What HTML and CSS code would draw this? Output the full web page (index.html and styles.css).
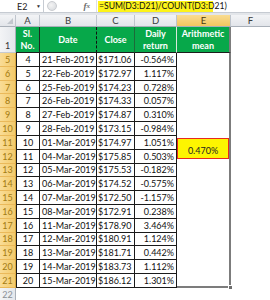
FILE: index.html
```html
<!DOCTYPE html>
<html>
<head>
<meta charset="utf-8">
<link rel="stylesheet" href="styles.css">
</head>
<body>
<div class="fbar">
  <div class="namebox"><span class="nb-text">E2</span><span class="nb-arrow">▼</span></div>
  <div class="splitter"></div>
  <div class="fx">f<span class="fxx">x</span></div>
  <div class="formula"><span class="hl">=SUM(D3:D21)/COUNT(D3:D21)</span></div>
</div>
<div class="gap"></div>
<div class="sheet">
  <div class="ch corner"><span class="tri"></span></div>
  <div class="ch">A</div>
  <div class="ch">B</div>
  <div class="ch">C</div>
  <div class="ch">D</div>
  <div class="ch ch-sel">E</div>
  <div class="ch ch-f">F</div>

  <div class="rh rh-1">1</div>
  <div class="gh gh-a">Sl.<br>No.</div>
  <div class="gh gh-b">Date</div>
  <div class="gh gh-c">Close</div>
  <div class="gh gh-d">Daily<br>return</div>
  <div class="gh gh-e">Arithmetic<br>mean</div>
  <div class="fcol"></div>

  <div class="ecol">
    <div class="espacer"></div>
    <div class="result">0.470%</div>
    <span class="handle"></span>
  </div>

  <div class="rh">5</div><div class="c ca">4</div><div class="c cb">21-Feb-2019</div><div class="c cc">$171.06</div><div class="c cd">-0.564%</div>
  <div class="rh">6</div><div class="c ca">5</div><div class="c cb">22-Feb-2019</div><div class="c cc">$172.97</div><div class="c cd">1.117%</div>
  <div class="rh">7</div><div class="c ca">6</div><div class="c cb">25-Feb-2019</div><div class="c cc">$174.23</div><div class="c cd">0.728%</div>
  <div class="rh">8</div><div class="c ca">7</div><div class="c cb">26-Feb-2019</div><div class="c cc">$174.33</div><div class="c cd">0.057%</div>
  <div class="rh">9</div><div class="c ca">8</div><div class="c cb">27-Feb-2019</div><div class="c cc">$174.87</div><div class="c cd">0.310%</div>
  <div class="rh">10</div><div class="c ca">9</div><div class="c cb">28-Feb-2019</div><div class="c cc">$173.15</div><div class="c cd">-0.984%</div>
  <div class="rh">11</div><div class="c ca">10</div><div class="c cb">01-Mar-2019</div><div class="c cc">$174.97</div><div class="c cd">1.051%</div>
  <div class="rh">12</div><div class="c ca">11</div><div class="c cb">04-Mar-2019</div><div class="c cc">$175.85</div><div class="c cd">0.503%</div>
  <div class="rh">13</div><div class="c ca">12</div><div class="c cb">05-Mar-2019</div><div class="c cc">$175.53</div><div class="c cd">-0.182%</div>
  <div class="rh">14</div><div class="c ca">13</div><div class="c cb">06-Mar-2019</div><div class="c cc">$174.52</div><div class="c cd">-0.575%</div>
  <div class="rh">15</div><div class="c ca">14</div><div class="c cb">07-Mar-2019</div><div class="c cc">$172.50</div><div class="c cd">-1.157%</div>
  <div class="rh">16</div><div class="c ca">15</div><div class="c cb">08-Mar-2019</div><div class="c cc">$172.91</div><div class="c cd">0.238%</div>
  <div class="rh">17</div><div class="c ca">16</div><div class="c cb">11-Mar-2019</div><div class="c cc">$178.90</div><div class="c cd">3.464%</div>
  <div class="rh">18</div><div class="c ca">17</div><div class="c cb">12-Mar-2019</div><div class="c cc">$180.91</div><div class="c cd">1.124%</div>
  <div class="rh">19</div><div class="c ca">18</div><div class="c cb">13-Mar-2019</div><div class="c cc">$181.71</div><div class="c cd">0.442%</div>
  <div class="rh">20</div><div class="c ca">19</div><div class="c cb">14-Mar-2019</div><div class="c cc">$183.73</div><div class="c cd">1.112%</div>
  <div class="rh">21</div><div class="c ca">20</div><div class="c cb">15-Mar-2019</div><div class="c cc">$186.12</div><div class="c cd">1.301%</div>

  <div class="rh rh-22">22</div>
  <div class="blank"></div>
</div>
</body>
</html>
```

FILE: styles.css
```css
* { box-sizing: border-box; }
html, body {
  margin: 0;
  padding: 0;
  width: 270px;
  height: 300px;
  overflow: hidden;
  background: #fff;
  font-family: Lato, "Liberation Sans", sans-serif;
}

.fbar {
  height: 13px;
  display: flex;
  align-items: stretch;
  background: #fff;
  border-bottom: 1px solid #c6cbd2;
}
.namebox {
  width: 44px;
  display: flex;
  align-items: center;
  border-right: 1px solid #c6cbd2;
  font-size: 9px;
  color: #222;
}
.nb-text { margin-left: 17px; flex: 1; }
.nb-arrow { font-size: 5px; margin-right: 2px; color: #333; }
.splitter {
  width: 10px;
  height: 10px;
  margin: 1px 0 0 3px;
  border-radius: 50%;
  background: radial-gradient(circle at 40% 40%, #f4f4f4, #d5d8dc);
  border: 1px solid #c9ccd0;
}
.fx {
  width: 40px;
  display: flex;
  align-items: center;
  justify-content: flex-end;
  padding-right: 6px;
  font-family: "Liberation Serif", serif;
  font-style: italic;
  font-weight: bold;
  font-size: 9px;
  color: #6b6b6b;
  border-right: 1px solid #dde0e4;
}
.fxx { font-size: 7px; }
.formula {
  flex: 1;
  display: flex;
  align-items: center;
  padding-left: 1px;
}
.hl {
  background: #fdf31a;
  font-size: 8.6px;
  color: #111;
  padding: 0 2px 0 1px;
  line-height: 11px;
  width: 115px;
  white-space: nowrap;
}
.gap {
  height: 2px;
  background: #e3e6ea;
}

.sheet {
  display: grid;
  grid-template-columns: 16px 24px 57px 38px 42px 54px 1fr;
  grid-template-rows: 12px 26px repeat(17, 13.82px) 1fr;
  height: 284px;
  font-size: 9px;
}

.ch {
  background: linear-gradient(#f3f4f6, #e2e5ea);
  border-right: 1px solid #bfc5cd;
  border-bottom: 1px solid #a9b0b9;
  color: #3b3b3b;
  font-size: 9.5px;
  display: flex;
  align-items: center;
  justify-content: center;
}
.corner { position: relative; }
.tri {
  position: absolute;
  right: 2px;
  bottom: 2px;
  width: 0;
  height: 0;
  border-left: 6px solid transparent;
  border-bottom: 6px solid #c2c7ce;
}
.ch-sel {
  background: linear-gradient(#f9dc91, #f3c65f);
  color: #4a3a10;
}
.ch-f { border-right: none; }

.rh {
  grid-column: 1;
  background: linear-gradient(90deg, #f9dc96, #f3ca6a);
  color: #a27a12;
  border-right: 1px solid #d8a842;
  border-bottom: 1px solid #eab95a;
  font-size: 9px;
  display: flex;
  align-items: center;
  justify-content: center;
}
.rh-1, .rh-22 {
  background: linear-gradient(90deg, #f3f4f6, #e4e7ec);
  color: #333;
  border-right: 1px solid #a9b0b9;
  border-bottom: 1px solid #c5cad1;
}
.rh-1 { align-items: flex-end; padding-bottom: 1px; }
.rh-22 { color: #8a8f96; align-items: flex-start; padding-top: 1px; }

.gh {
  background: #07a84a;
  color: #fff;
  font-weight: bold;
  font-size: 9px;
  line-height: 12px;
  text-align: center;
  display: flex;
  align-items: center;
  justify-content: center;
  border-bottom: 1px solid #1c1c1c;
  border-right: 1px solid #1d6a3a;
}
.gh-a { border-right: 1px solid #1c2a20; }
.gh-b { border-right: 1px dashed #111; }
.gh-d { border-right: 1px solid #d8e8dc; }
.gh-e { border-right: 2px solid #7c7c7c; }

.fcol {
  grid-column: 7;
  grid-row: 2 / span 19;
  background: #fff;
}
.ecol {
  grid-column: 6;
  grid-row: 3 / span 17;
  border-right: 2px solid #7c7c7c;
  border-bottom: 2px solid #7c7c7c;
  position: relative;
  display: flex;
  flex-direction: column;
}
.espacer { height: 85px; }
.result {
  height: 21px;
  background: #fdf500;
  border: 1px solid #e62a1e;
  display: flex;
  align-items: center;
  justify-content: center;
  color: #222;
  font-size: 9px;
  padding-top: 3px;
}
.handle {
  position: absolute;
  right: -4px;
  bottom: -4px;
  width: 5px;
  height: 5px;
  background: #6e6e6e;
  border: 1px solid #fff;
}

.c {
  border-right: 1px solid #1a1a1a;
  border-bottom: 1px solid #1a1a1a;
  color: #111;
  font-size: 9px;
  display: flex;
  align-items: center;
  white-space: nowrap;
  overflow: hidden;
}
.ca { grid-column: 2; justify-content: center; border-left: 1px solid #1a1a1a; }
.cb { grid-column: 3; padding-left: 2px; }
.cc { grid-column: 4; padding-left: 1px; }
.cd { grid-column: 5; justify-content: flex-end; padding-right: 2px; }
.blank { grid-column: 2 / span 6; background: #fff; }
```
